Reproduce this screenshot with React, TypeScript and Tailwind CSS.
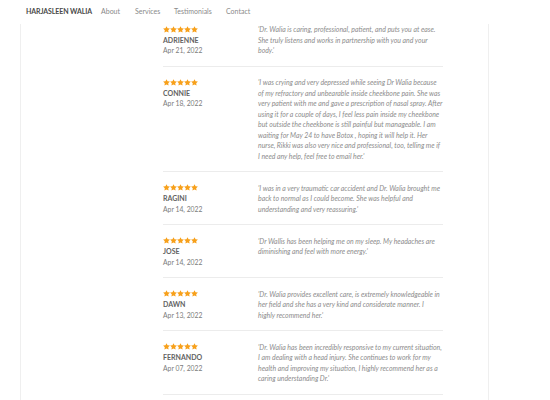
import React from "react";

interface Review {
  name: string;
  date: string;
  lines: string[];
}

const reviews: Review[] = [
  {
    name: "Adrienne",
    date: "Apr 21, 2022",
    lines: [
      "'Dr. Walia is caring, professional, patient, and puts you at ease.",
      "She truly listens and works in partnership with you and your",
      "body.'",
    ],
  },
  {
    name: "Connie",
    date: "Apr 18, 2022",
    lines: [
      "'I was crying and very depressed while seeing Dr Walia because",
      "of my refractory and unbearable inside cheekbone pain. She was",
      "very patient with me and gave a prescription of nasal spray. After",
      "using it for a couple of days, I feel less pain inside my cheekbone",
      "but outside the cheekbone is still painful but manageable. I am",
      "waiting for May 24 to have Botox , hoping it will help it. Her",
      "nurse, Rikki was also very nice and professional, too, telling me if",
      "I need any help, feel free to email her.'",
    ],
  },
  {
    name: "Ragini",
    date: "Apr 14, 2022",
    lines: [
      "'I was in a very traumatic car accident and Dr. Walia brought me",
      "back to normal as I could become. She was helpful and",
      "understanding and very reassuring.'",
    ],
  },
  {
    name: "Jose",
    date: "Apr 14, 2022",
    lines: [
      "'Dr Wallis has been helping me on my sleep. My headaches are",
      "diminishing and feel with more energy.'",
    ],
  },
  {
    name: "Dawn",
    date: "Apr 13, 2022",
    lines: [
      "'Dr. Walia provides excellent care, is extremely knowledgeable in",
      "her field and she has a very kind and considerate manner. I",
      "highly recommend her.'",
    ],
  },
  {
    name: "Fernando",
    date: "Apr 07, 2022",
    lines: [
      "'Dr. Walia has been incredibly responsive to my current situation,",
      "I am dealing with a head injury. She continues to work for my",
      "health and improving my situation, I highly recommend her as a",
      "caring understanding Dr.'",
    ],
  },
];

const Star = () => (
  <svg width="7" height="7" viewBox="0 0 24 24" className="shrink-0">
    <path
      fill="#f7a01a"
      d="M12 0.5l3.6 7.3 8 1.1-5.8 5.6 1.4 8L12 18.7l-7.2 3.8 1.4-8L0.4 8.9l8-1.1z"
    />
  </svg>
);

const ReviewRow = ({ review, first }: { review: Review; first: boolean }) => (
  <div className={`flex border-b border-[#ececec] ${first ? "pt-0" : "pt-[10.5px]"} pb-[10px]`}>
    <div className="w-[95px] shrink-0 leading-[10.5px]">
      <div className="flex h-[10.5px] items-center">
        {[0, 1, 2, 3, 4].map((i) => (
          <Star key={i} />
        ))}
      </div>
      <div className="text-[7px] font-bold uppercase text-[#626262]">{review.name}</div>
      <div className="text-[6.8px] text-[#7c7c7c]">{review.date}</div>
    </div>
    <div className="text-[6.9px] italic leading-[10.5px] text-[#8c8c8c]">
      {review.lines.map((line, i) => (
        <span key={i} className="block whitespace-nowrap">
          {line}
        </span>
      ))}
    </div>
  </div>
);

export default function App() {
  return (
    <div className="h-[400px] w-[550px] overflow-hidden bg-white font-['Lato',sans-serif]">
      <nav className="flex h-[24px] items-center pb-[2px] pl-[26px] text-[7px]">
        <span className="w-[75px] font-bold uppercase tracking-[-0.1px] text-[#4a4a4a]">Harjasleen Walia</span>
        <span className="w-[34px] text-[#8a8a8a]">About</span>
        <span className="w-[39px] text-[#8a8a8a]">Services</span>
        <span className="w-[52px] text-[#8a8a8a]">Testimonials</span>
        <span className="text-[#8a8a8a]">Contact</span>
      </nav>
      <div className="ml-[20px] h-[376px] w-[469px] border-x border-[#efefef] pl-[142px] pr-[45px]">
        {reviews.map((r, i) => (
          <ReviewRow key={r.name} review={r} first={i === 0} />
        ))}
      </div>
    </div>
  );
}
